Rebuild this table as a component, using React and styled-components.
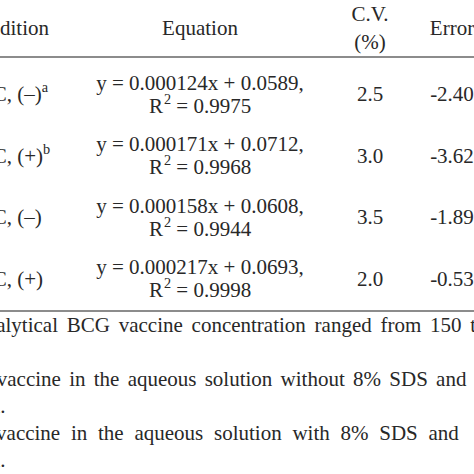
import React from 'react';
import styled, { createGlobalStyle } from 'styled-components';

const GlobalStyle = createGlobalStyle`
  html, body {
    margin: 0;
    padding: 0;
    background: #fff;
    overflow: hidden;
  }
  body {
    font-family: "Liberation Serif", "Times New Roman", serif;
    color: #282828;
  }
`;

const Page = styled.div`
  width: 474px;
  height: 474px;
  overflow: hidden;
`;

/* the table is wider than the shot, so it starts left of the frame */
const Sheet = styled.div`
  width: 560px;
  margin-left: -60px;
  font-size: 21px;
`;

const Grid = styled.div`
  display: grid;
  grid-template-columns: 134px 252px 88px 76px;
`;

const HeadRow = styled(Grid)`
  height: 56px;
  border-bottom: 2px solid #8c8c8c;
`;

const HeadCell = styled.div`
  display: flex;
  flex-direction: column;
  align-items: center;
  justify-content: center;
  line-height: 28px;
  text-align: center;
`;

const Body = styled.div`
  padding-top: 6px;
  border-bottom: 2px solid #8c8c8c;
`;

const Row = styled(Grid)`
  height: 61.5px;
  align-items: center;
  line-height: 23px;
`;

const Cell = styled.div`
  display: flex;
  flex-direction: column;
  align-items: ${(p) => (p.$left ? 'flex-start' : 'center')};
  padding-left: ${(p) => (p.$left ? '18px' : '0')};
  white-space: nowrap;
`;

const Sup = styled.sup`
  font-size: 0.68em;
  line-height: 1;
  vertical-align: baseline;
  position: relative;
  top: -0.62em;
  margin-left: ${(p) => (p.$gap ? '1px' : '0')};
`;

const Notes = styled.div`
  line-height: 27px;
  padding-left: 2px;
`;

const NoteLine = styled.div`
  white-space: nowrap;
  word-spacing: ${(p) => p.$spread || 0}px;
  margin-left: ${(p) => p.$shift || 0}px;
  height: 27px;
`;

const rows = [
  { cond: '25 °C, (–)', mark: 'a', eq: 'y = 0.000124x + 0.0589,', r2: '0.9975', cv: '2.5', err: '-2.40' },
  { cond: '25 °C, (+)', mark: 'b', eq: 'y = 0.000171x + 0.0712,', r2: '0.9968', cv: '3.0', err: '-3.62' },
  { cond: '37 °C, (–)', mark: '', eq: 'y = 0.000158x + 0.0608,', r2: '0.9944', cv: '3.5', err: '-1.89' },
  { cond: '37 °C, (+)', mark: '', eq: 'y = 0.000217x + 0.0693,', r2: '0.9998', cv: '2.0', err: '-0.53' },
];

export default function App() {
  return (
    <Page>
      <GlobalStyle />
      <Sheet>
        <HeadRow>
          <HeadCell>Condition</HeadCell>
          <HeadCell>Equation</HeadCell>
          <HeadCell>
            <span>C.V.</span>
            <span>(%)</span>
          </HeadCell>
          <HeadCell>Error</HeadCell>
        </HeadRow>
        <Body>
          {rows.map((r) => (
            <Row key={r.eq}>
              <Cell $left>
                <span>
                  {r.cond}
                  {r.mark && <Sup>{r.mark}</Sup>}
                </span>
              </Cell>
              <Cell>
                <span>{r.eq}</span>
                <span>
                  R<Sup $gap>2</Sup> = {r.r2}
                </span>
              </Cell>
              <Cell>{r.cv}</Cell>
              <Cell>{r.err}</Cell>
            </Row>
          ))}
        </Body>
        <Notes>
          <NoteLine $spread={3.5} $shift={-7}>
            The analytical BCG vaccine concentration ranged from 150 to 1500
          </NoteLine>
          <NoteLine>mg/L.</NoteLine>
          <NoteLine $spread={3} $shift={-3}>
            <Sup>a</Sup>BCG vaccine in the aqueous solution without 8% SDS and
          </NoteLine>
          <NoteLine>shaken.</NoteLine>
          <NoteLine $spread={5.5} $shift={-7}>
            <Sup>b</Sup>BCG vaccine in the aqueous solution with 8% SDS and
          </NoteLine>
          <NoteLine>shaken.</NoteLine>
        </Notes>
      </Sheet>
    </Page>
  );
}
